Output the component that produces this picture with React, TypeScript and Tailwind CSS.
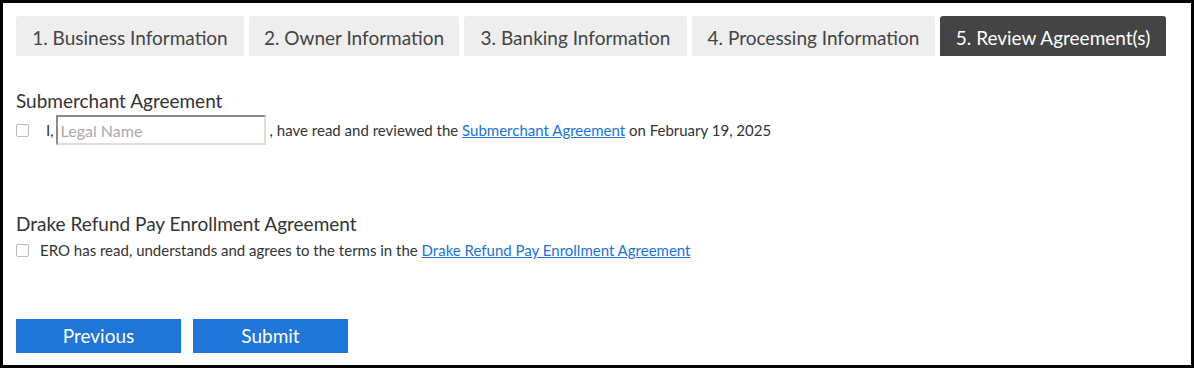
import { useState } from "react";

const TABS = [
  { label: "1. Business Information", w: "w-[228px]" },
  { label: "2. Owner Information", w: "w-[210px]" },
  { label: "3. Banking Information", w: "w-[223px]" },
  { label: "4. Processing Information", w: "w-[243px]" },
  { label: "5. Review Agreement(s)", w: "w-[226px]" },
];

/* =================================================================== */
/*                                APP                                  */
/* =================================================================== */
export default function App() {
  const [legalName, setLegalName] = useState("");

  return (
    <div
      className="box-border h-[368px] w-[1194px] border-[3px] border-black bg-white px-[13px] pt-[13px] text-[#333]"
      style={{ fontFamily: "Lato, 'Noto Sans', sans-serif" }}
    >
      {/* ─────────── TABS ─────────── */}
      <div className="flex gap-[5px]">
        {TABS.map((t, i) => {
          const active = i === TABS.length - 1;
          return (
            <div
              key={t.label}
              className={
                "flex h-[40px] items-center justify-center rounded-t-[3px] pt-[4px] text-[19px] " +
                t.w +
                (active ? " bg-[#444] text-white" : " bg-[#eee] text-[#444]")
              }
            >
              {t.label}
            </div>
          );
        })}
      </div>

      {/* ─────────── SUBMERCHANT ─────────── */}
      <h2 className="mt-[34px] text-[19px] leading-[22px]">Submerchant Agreement</h2>
      <div className="mt-[3px] flex h-[30px] items-center text-[15px]">
        <Checkbox />
        <span className="ml-[17px]">I,</span>
        <input
          value={legalName}
          onChange={(e) => setLegalName(e.target.value)}
          placeholder="Legal Name"
          className="ml-[2px] box-border h-[30px] w-[210px] border-2 border-b-[#ddd] border-l-[#8a8a8a] border-r-[#ddd] border-t-[#8a8a8a] px-[3px] text-[16px] outline-none placeholder:text-[#aaa]"
        />
        <span className="ml-[4px]">
          , have read and reviewed the{" "}
          <a href="#" className="text-[#1a73d4] underline">
            Submerchant Agreement
          </a>{" "}
          on February 19, 2025
        </span>
      </div>

      {/* ─────────── DRAKE REFUND PAY ─────────── */}
      <h2 className="mt-[68px] text-[19px] leading-[22px]">Drake Refund Pay Enrollment Agreement</h2>
      <div className="mt-[3px] flex h-[24px] items-center text-[15px]">
        <Checkbox />
        <span className="ml-[11px]">
          ERO has read, understands and agrees to the terms in the{" "}
          <a href="#" className="text-[#1a73d4] underline">
            Drake Refund Pay Enrollment Agreement
          </a>
        </span>
      </div>

      {/* ─────────── ACTIONS ─────────── */}
      <div className="mt-[57px] flex gap-[12px]">
        <button className="h-[34px] w-[165px] bg-[#1f75d8] text-[19px] text-white">Previous</button>
        <button className="h-[34px] w-[155px] bg-[#1f75d8] text-[19px] text-white">Submit</button>
      </div>
    </div>
  );
}

function Checkbox() {
  return (
    <span className="box-border inline-block h-[13px] w-[13px] rounded-[2px] border border-[#bbb] bg-white" />
  );
}
